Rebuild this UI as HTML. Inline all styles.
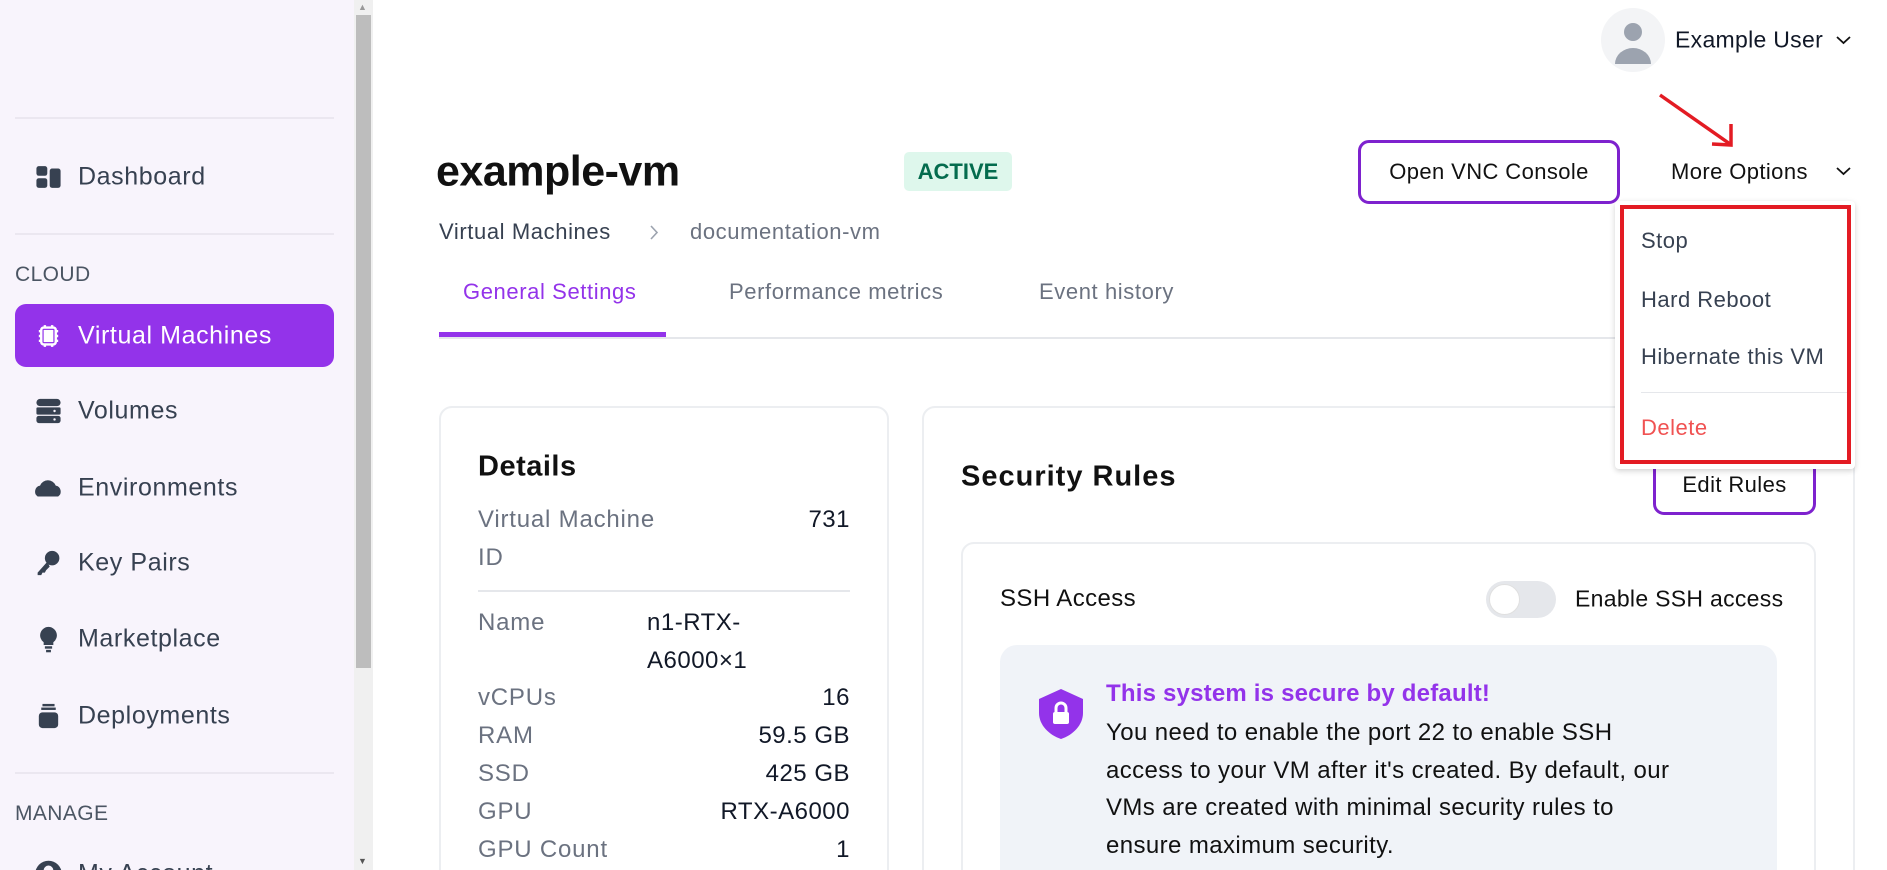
<!DOCTYPE html>
<html style="width:1887px;height:870px;overflow:hidden"><head><meta charset="utf-8"><style>
*{margin:0;padding:0;box-sizing:border-box}
body{width:1887px;height:870px;overflow:hidden;background:#fff;font-family:"Liberation Sans",sans-serif;color:#111827}
#w{position:relative;width:1887px;height:870px;overflow:hidden}
.a{position:absolute;white-space:nowrap}
.side{position:absolute;left:0;top:0;width:354px;height:870px;background:#f8f4fc}
.sb{position:absolute;left:354px;top:0;width:19px;height:870px;background:#f0f0f0}
.thumb{position:absolute;left:356px;top:15px;width:15px;height:653px;background:#bdbdbd}
.hr{position:absolute;height:2px;background:#ebe7f0}
.nav{position:absolute;left:78px;font-size:25px;letter-spacing:0.6px;color:#374151;transform:translateY(-50%);white-space:nowrap}
.ico{position:absolute;left:34px;width:29px;height:29px;transform:translateY(-50%)}
.sec{position:absolute;left:15px;font-size:21px;letter-spacing:0.4px;color:#4b5563;transform:translateY(-50%)}
.c{transform:translateY(-50%)}
.lbl{color:#6b7280;font-size:24px;letter-spacing:0.8px}
.val{color:#111827;font-size:24px;letter-spacing:0.5px}
.dd{font-size:22px;letter-spacing:0.5px;color:#374151}
</style></head><body><div id="w">
<div class="side"></div>
<div class="sb"></div><div class="thumb"></div>
<div class="a" style="left:358px;top:2px;font-size:9px;color:#999">▲</div>
<div class="a" style="left:358px;top:856px;font-size:9px;color:#555">▼</div>
<div class="hr" style="left:15px;top:117px;width:319px"></div>
<div class="hr" style="left:15px;top:233px;width:319px"></div>
<div class="hr" style="left:15px;top:772px;width:319px"></div>

<svg class="ico" style="top:177px" viewBox="0 0 24 24"><rect x="2" y="3" width="9" height="8" rx="2" fill="#374151"/><rect x="2" y="13" width="9" height="8" rx="2" fill="#374151"/><rect x="13" y="5" width="9" height="16" rx="2" fill="#374151"/></svg>
<div class="nav" style="top:177px">Dashboard</div>
<div class="sec" style="top:275px">CLOUD</div>
<div class="a" style="left:15px;top:304px;width:319px;height:63px;background:#9333ea;border-radius:11px"></div>
<svg class="ico" style="top:336px" viewBox="0 0 24 24" fill="none" stroke="#fff" stroke-width="2"><rect x="6" y="5" width="12" height="14" rx="2"/><rect x="9" y="8" width="6" height="8" fill="#fff"/><path d="M4 8h2M4 12h2M4 16h2M18 8h2M18 12h2M18 16h2M9 3v2M15 3v2M9 19v2M15 19v2"/></svg>
<div class="nav" style="top:336px;color:#fff">Virtual Machines</div>
<svg class="ico" style="top:411px" viewBox="0 0 24 24"><rect x="2" y="2" width="20" height="6" rx="3" fill="#374151"/><rect x="2" y="9" width="20" height="6" rx="1" fill="#374151"/><rect x="2" y="16" width="20" height="6" rx="2" fill="#374151"/><circle cx="17" cy="12" r="1" fill="#f8f4fc"/><circle cx="17" cy="19" r="1" fill="#f8f4fc"/></svg>
<div class="nav" style="top:411px">Volumes</div>
<svg class="ico" style="top:488px" viewBox="0 0 24 24"><path d="M3 19a5 5 0 0 1 2-9 7 7 0 0 1 13 0 5 5 0 0 1 2 9z" fill="#374151"/></svg>
<div class="nav" style="top:488px">Environments</div>
<svg class="ico" style="top:563px" viewBox="0 0 24 24"><circle cx="15" cy="8" r="6" fill="#374151"/><path d="M11 11L3 20v2h3l1-2h2l1-2 3-3z" fill="#374151"/></svg>
<div class="nav" style="top:563px">Key Pairs</div>
<svg class="ico" style="top:639px" viewBox="0 0 24 24"><path d="M12 2a7 7 0 0 0-4 12.7V17h8v-2.3A7 7 0 0 0 12 2z" fill="#374151"/><rect x="9" y="18" width="6" height="2" fill="#374151"/><rect x="10" y="21" width="4" height="2" fill="#374151"/></svg>
<div class="nav" style="top:639px">Marketplace</div>
<svg class="ico" style="top:716px" viewBox="0 0 24 24"><rect x="4" y="9" width="16" height="13" rx="3" fill="#374151"/><rect x="6" y="5" width="12" height="2" fill="#374151"/><rect x="7" y="2" width="10" height="2" fill="#374151"/></svg>
<div class="nav" style="top:716px">Deployments</div>
<div class="sec" style="top:814px">MANAGE</div>
<svg class="ico" style="top:874px" viewBox="0 0 24 24"><circle cx="12" cy="12" r="11" fill="#374151"/><circle cx="12" cy="9" r="4" fill="#f8f4fc"/></svg>
<div class="nav" style="top:874px">My Account</div>

<svg class="a" style="left:1601px;top:8px" width="64" height="64" viewBox="0 0 64 64"><circle cx="32" cy="32" r="32" fill="#f3f4f6"/><circle cx="32" cy="24" r="9" fill="#9ca3af"/><path d="M14 56a18 16 0 0 1 36 0z" fill="#9ca3af"/></svg>
<div class="a c" style="left:1675px;top:40px;font-size:23px;letter-spacing:0.3px;color:#111827">Example User</div>
<svg class="a" style="left:1836px;top:35px" width="15" height="10" viewBox="0 0 15 10"><path d="M1 2l6.5 6L14 2" fill="none" stroke="#111" stroke-width="1.8"/></svg>
<svg class="a" style="left:1650px;top:88px" width="95" height="65" viewBox="0 0 95 65"><path d="M10 7L80 56" stroke="#e31b23" stroke-width="3.5" fill="none"/><path d="M81 36L81 57L62 56" stroke="#e31b23" stroke-width="3.5" fill="none"/></svg>

<div class="a c" style="left:436px;top:172px;font-size:43px;font-weight:bold;color:#111;letter-spacing:-0.5px">example-vm</div>
<div class="a" style="left:904px;top:152px;width:108px;height:39px;background:#def7ec;border-radius:5px;color:#046c4e;font-size:22px;font-weight:bold;text-align:center;line-height:39px">ACTIVE</div>
<div class="a" style="left:1358px;top:140px;width:262px;height:64px;border:3px solid #7e22ce;border-radius:11px;font-size:22px;letter-spacing:0.4px;text-align:center;line-height:58px;color:#111">Open VNC Console</div>
<div class="a c" style="left:1671px;top:172px;font-size:22px;letter-spacing:0.4px;color:#111">More Options</div>
<svg class="a" style="left:1836px;top:166px" width="15" height="10" viewBox="0 0 15 10"><path d="M1 2l6.5 6L14 2" fill="none" stroke="#111" stroke-width="1.8"/></svg>

<div class="a c" style="left:439px;top:232px;font-size:22px;letter-spacing:0.6px;color:#374151">Virtual Machines</div>
<svg class="a" style="left:648px;top:224px" width="12" height="17" viewBox="0 0 12 17"><path d="M3 2l6 6.5L3 15" fill="none" stroke="#9ca3af" stroke-width="1.6"/></svg>
<div class="a c" style="left:690px;top:232px;font-size:22px;letter-spacing:0.6px;color:#6b7280">documentation-vm</div>

<div class="a" style="left:439px;top:337px;width:1180px;height:2px;background:#e5e7eb"></div>
<div class="a" style="left:439px;top:332px;width:227px;height:5px;background:#9333ea"></div>
<div class="a c" style="left:463px;top:292px;font-size:22px;letter-spacing:0.6px;color:#9333ea">General Settings</div>
<div class="a c" style="left:729px;top:292px;font-size:22px;letter-spacing:0.6px;color:#6b7280">Performance metrics</div>
<div class="a c" style="left:1039px;top:292px;font-size:22px;letter-spacing:0.6px;color:#6b7280">Event history</div>

<div class="a" style="left:439px;top:406px;width:450px;height:500px;border:2px solid #eceef1;border-radius:13px"></div>
<div class="a c" style="left:478px;top:467px;font-size:29px;font-weight:bold;letter-spacing:0.5px;color:#111">Details</div>
<div class="a c lbl" style="left:478px;top:520px">Virtual Machine</div>
<div class="a c lbl" style="left:478px;top:558px">ID</div>
<div class="a c val" style="right:1037px;top:520px">731</div>
<div class="a" style="left:478px;top:590px;width:372px;height:2px;background:#e5e7eb"></div>
<div class="a c lbl" style="left:478px;top:623px">Name</div>
<div class="a c val" style="left:647px;top:623px">n1-RTX-</div>
<div class="a c val" style="left:647px;top:661px">A6000×1</div>
<div class="a c lbl" style="left:478px;top:698px">vCPUs</div><div class="a c val" style="right:1037px;top:698px">16</div>
<div class="a c lbl" style="left:478px;top:736px">RAM</div><div class="a c val" style="right:1037px;top:736px">59.5 GB</div>
<div class="a c lbl" style="left:478px;top:774px">SSD</div><div class="a c val" style="right:1037px;top:774px">425 GB</div>
<div class="a c lbl" style="left:478px;top:812px">GPU</div><div class="a c val" style="right:1037px;top:812px">RTX-A6000</div>
<div class="a c lbl" style="left:478px;top:850px">GPU Count</div><div class="a c val" style="right:1037px;top:850px">1</div>

<div class="a" style="left:922px;top:406px;width:933px;height:500px;border:2px solid #eceef1;border-radius:13px"></div>
<div class="a c" style="left:961px;top:477px;font-size:29px;font-weight:bold;letter-spacing:1px;color:#111">Security Rules</div>
<div class="a" style="left:1653px;top:451px;width:163px;height:64px;border:3px solid #7e22ce;border-radius:11px;font-size:22px;letter-spacing:0.4px;text-align:center;line-height:62px;color:#111">Edit Rules</div>
<div class="a" style="left:961px;top:542px;width:855px;height:400px;border:2px solid #eceef1;border-radius:13px;background:#fff"></div>
<div class="a c" style="left:1000px;top:599px;font-size:24px;letter-spacing:0.4px;color:#111">SSH Access</div>
<div class="a" style="left:1486px;top:581px;width:70px;height:37px;background:#e5e7eb;border-radius:19px"></div>
<div class="a" style="left:1489px;top:584px;width:31px;height:31px;background:#fff;border-radius:50%;border:1px solid #e0e0e0"></div>
<div class="a c" style="left:1575px;top:599px;font-size:23px;letter-spacing:0.3px;color:#111">Enable SSH access</div>
<div class="a" style="left:1000px;top:645px;width:777px;height:300px;background:#f0f3f8;border-radius:17px"></div>
<svg class="a" style="left:1037px;top:688px" width="48" height="51" viewBox="0 0 48 51"><path d="M24 1L2 11v14c0 12 10 22 22 26 12-4 22-14 22-26V11z" fill="#9333ea"/><rect x="16" y="24" width="16" height="12" rx="2" fill="#fff"/><path d="M19 24v-4a5 5 0 0 1 10 0v4" fill="none" stroke="#fff" stroke-width="3"/></svg>
<div class="a c" style="left:1106px;top:694px;font-size:24px;font-weight:bold;letter-spacing:0.2px;color:#9333ea">This system is secure by default!</div>
<div class="a" style="left:1106px;top:714px;font-size:24px;letter-spacing:0.4px;line-height:37.5px;color:#111">You need to enable the port 22 to enable SSH<br>access to your VM after it's created. By default, our<br>VMs are created with minimal security rules to<br>ensure maximum security.</div>

<div class="a" style="left:1615px;top:201px;width:240px;height:268px;background:#fff;border-radius:4px;box-shadow:0 2px 6px rgba(0,0,0,0.18)"></div>
<div class="a" style="left:1641px;top:392px;width:210px;height:1px;background:#e5e7eb"></div>
<div class="a c dd" style="left:1641px;top:241px">Stop</div>
<div class="a c dd" style="left:1641px;top:300px">Hard Reboot</div>
<div class="a c dd" style="left:1641px;top:357px">Hibernate this VM</div>
<div class="a c dd" style="left:1641px;top:428px;color:#f05252">Delete</div>
<div class="a" style="left:1620px;top:205px;width:231px;height:259px;border:4px solid #e31b23"></div>
</div></body></html>
